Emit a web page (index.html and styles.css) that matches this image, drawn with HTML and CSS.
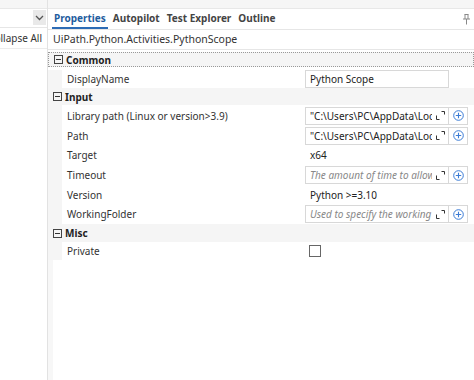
FILE: index.html
```html
<!DOCTYPE html>
<html lang="en">
<head>
  <meta charset="UTF-8">
  <title>Properties</title>
  <link rel="stylesheet" href="styles.css">
</head>
<body>
  <div class="app">
    <div class="side">
      <div class="strip"></div>
      <div class="combo"><span class="chev"><svg width="9" height="6" viewBox="0 0 9 6"><path d="M1 1l3.5 3.5L8 1" fill="none" stroke="#555" stroke-width="1.3"/></svg></span></div>
      <div class="collapse"><span>Collapse All</span></div>
    </div>
    <div class="main">
      <div class="strip"></div>
      <div class="tabs">
        <span class="tab active">Properties</span>
        <span class="tab">Autopilot</span>
        <span class="tab">Test Explorer</span>
        <span class="tab">Outline</span>
        <span class="pin"><svg width="9" height="11" viewBox="0 0 9 11"><path d="M2.5 0.5h4M3 0.5v4.5M6 0.5v4.5M1 5h7M4.5 5v5.5" fill="none" stroke="#888" stroke-width="1"/></svg></span>
      </div>
      <div class="typename">UiPath.Python.Activities.PythonScope</div>
      <div class="grid">
        <div class="row head focus"><span class="gut"><i class="box"></i></span><span class="lbl">Common</span></div>
        <div class="row r18"><span class="gut"></span><span class="lbl">DisplayName</span><span class="val"><span class="field plain"><span class="ftxt">Python Scope</span></span></span></div>
        <div class="row head h17"><span class="gut"><i class="box"></i></span><span class="lbl">Input</span></div>
        <div class="row r21"><span class="gut"></span><span class="lbl">Library path (Linux or version&gt;3.9)</span><span class="val"><span class="field"><span class="ftxt">"C:\Users\PC\AppData\Local</span><svg class="exp" width="9" height="9" viewBox="0 0 9 9"><path d="M0.5 4.5v4h3M5.5 0.5h3v3" fill="none" stroke="#333" stroke-width="1"/></svg></span><span class="plus"><svg width="11" height="11" viewBox="0 0 11 11"><circle cx="5.5" cy="5.5" r="4.8" fill="#fff" stroke="#3a7bd5" stroke-width="1"/><path d="M5.5 2.8v5.4M2.8 5.5h5.4" stroke="#3a7bd5" stroke-width="1.1"/></svg></span></span></div>
        <div class="row"><span class="gut"></span><span class="lbl">Path</span><span class="val"><span class="field"><span class="ftxt">"C:\Users\PC\AppData\Local</span><svg class="exp" width="9" height="9" viewBox="0 0 9 9"><path d="M0.5 4.5v4h3M5.5 0.5h3v3" fill="none" stroke="#333" stroke-width="1"/></svg></span><span class="plus"><svg width="11" height="11" viewBox="0 0 11 11"><circle cx="5.5" cy="5.5" r="4.8" fill="#fff" stroke="#3a7bd5" stroke-width="1"/><path d="M5.5 2.8v5.4M2.8 5.5h5.4" stroke="#3a7bd5" stroke-width="1.1"/></svg></span></span></div>
        <div class="row r20"><span class="gut"></span><span class="lbl">Target</span><span class="val"><span class="text">x64</span></span></div>
        <div class="row r20"><span class="gut"></span><span class="lbl">Timeout</span><span class="val"><span class="field hint"><span class="ftxt">The amount of time to allow</span><svg class="exp" width="9" height="9" viewBox="0 0 9 9"><path d="M0.5 4.5v4h3M5.5 0.5h3v3" fill="none" stroke="#333" stroke-width="1"/></svg></span><span class="plus"><svg width="11" height="11" viewBox="0 0 11 11"><circle cx="5.5" cy="5.5" r="4.8" fill="#fff" stroke="#3a7bd5" stroke-width="1"/><path d="M5.5 2.8v5.4M2.8 5.5h5.4" stroke="#3a7bd5" stroke-width="1.1"/></svg></span></span></div>
        <div class="row"><span class="gut"></span><span class="lbl">Version</span><span class="val"><span class="text">Python &gt;=3.10</span></span></div>
        <div class="row r20"><span class="gut"></span><span class="lbl">WorkingFolder</span><span class="val"><span class="field hint"><span class="ftxt">Used to specify the working</span><svg class="exp" width="9" height="9" viewBox="0 0 9 9"><path d="M0.5 4.5v4h3M5.5 0.5h3v3" fill="none" stroke="#333" stroke-width="1"/></svg></span><span class="plus"><svg width="11" height="11" viewBox="0 0 11 11"><circle cx="5.5" cy="5.5" r="4.8" fill="#fff" stroke="#3a7bd5" stroke-width="1"/><path d="M5.5 2.8v5.4M2.8 5.5h5.4" stroke="#3a7bd5" stroke-width="1.1"/></svg></span></span></div>
        <div class="row head"><span class="gut"><i class="box"></i></span><span class="lbl">Misc</span></div>
        <div class="row r18"><span class="gut"></span><span class="lbl">Private</span><span class="val"><span class="check"></span></span></div>
        <div class="rest"><span class="gut"></span></div>
      </div>
    </div>
  </div>
</body>
</html>
```

FILE: styles.css
```css
body { margin: 0; font-family: "Noto Sans", "Open Sans", sans-serif; font-size: 10px; color: #333; background: #fff; }
.app { display: flex; width: 474px; height: 380px; overflow: hidden; }

.strip { height: 8px; background: #f6f6f6; border-bottom: 1px solid #e8e8e8; }

.side { width: 47px; border-right: 1px solid #e2e2e2; flex: none; }
.combo { height: 17px; margin-top: 1px; display: flex; justify-content: flex-end; border-bottom: 1px solid #e6e6e6; }
.chev { width: 13px; height: 15px; background: #e9e9e9; display: flex; align-items: center; justify-content: center; margin-right: 1px; }
.collapse { height: 20px; display: flex; justify-content: flex-end; align-items: center; overflow: hidden; white-space: nowrap; padding-right: 5px; border-bottom: 1px solid #ececec; }
.collapse span { color: #333; }

.main { flex: 1; display: flex; flex-direction: column; min-width: 0; }
.tabs { height: 20px; display: flex; align-items: flex-end; padding-left: 4px; border-bottom: 1px solid #e6e6e6; }
.tab { font-weight: bold; color: #444; padding: 0 2px 2px; margin-right: 3px; border-bottom: 2px solid transparent; }
.tab.active { color: #1f5d9e; border-bottom-color: #2d6cb5; }
.pin { margin-left: auto; margin-right: 3px; align-self: center; display: flex; }

.typename { height: 19px; line-height: 19px; padding-left: 5px; font-size: 10.5px; border-bottom: 1px solid #e6e6e6; margin-bottom: 2px; }

.grid { flex: 1; display: flex; flex-direction: column; }
.row { display: flex; align-items: center; height: 19px; flex: none; }
.row.r18 { height: 18px; }
.row.r20 { height: 20px; }
.row.r21 { height: 21px; }
.row.head { height: 18px; background: #f5f5f5; font-weight: bold; color: #222; }
.row.head.h17 { height: 17px; }
.row.head.focus { height: 13px; border: 1px dotted #999; margin-bottom: 3px; }
.gut { width: 14px; align-self: stretch; background: #f5f5f5; display: flex; align-items: center; justify-content: center; flex: none; }
.head .gut { background: transparent; }
.box { width: 7px; height: 7px; border: 1px solid #444; margin-left: 4px; background: linear-gradient(#333, #333) center / 5px 1px no-repeat; }
.lbl { width: 238px; padding-left: 5px; white-space: nowrap; flex: none; }
.head .lbl { padding-left: 3px; }
.val { display: flex; align-items: center; flex: 1; }
.field { width: 142px; height: 16px; border: 1px solid #d8d8d8; display: flex; align-items: center; color: #222; background: #fff; }
.ftxt { flex: 1; min-width: 0; overflow: hidden; white-space: nowrap; padding-left: 4px; margin-right: 4px; }
.exp { flex: none; margin-right: 3px; }
.field.hint { color: #888; font-style: italic; }
.plus { width: 18px; height: 16px; border: 1px solid #d8d8d8; border-left: none; display: flex; align-items: center; justify-content: center; }
.text { padding-left: 5px; color: #222; }
.check { width: 10px; height: 10px; border: 1px solid #666; margin-left: 4px; background: #fff; }
.rest { flex: 1; display: flex; }
.rest .gut { width: 5px; background: #f7f7f7; }
```
